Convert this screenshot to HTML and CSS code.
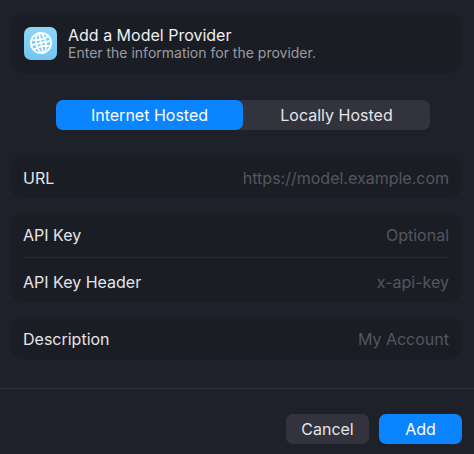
FILE: index.html
```html
<!DOCTYPE html>
<html lang="en">
<head>
    <meta charset="UTF-8">
    <meta name="viewport" content="width=device-width, initial-scale=1.0">
    <title>Add a Model Provider</title>
    <link rel="stylesheet" href="styles.css">
</head>
<body>

<div class="dialog">
    <div class="card header">
        <div class="app-icon">
            <svg width="24" height="24" viewBox="0 0 25 25" fill="none" stroke="#fff" stroke-width="1.8">
                <g transform="rotate(-12 12.5 12.5)">
                    <circle cx="12.5" cy="12.5" r="10.6"/>
                    <ellipse cx="12.5" cy="12.5" rx="5" ry="10.6"/>
                    <path d="M12.5 2v21"/>
                    <path d="M3.6 7.2q8.9 3.6 17.8 0"/>
                    <path d="M2 12.5h21"/>
                    <path d="M3.6 17.8q8.9-3.6 17.8 0"/>
                </g>
            </svg>
        </div>
        <div class="header-text">
            <h1>Add a Model Provider</h1>
            <p>Enter the information for the provider.</p>
        </div>
    </div>

    <div class="segments">
        <div class="segment active">Internet Hosted</div>
        <div class="segment">Locally Hosted</div>
    </div>

    <div class="card group url-group">
        <div class="row single">
            <span class="label">URL</span>
            <span class="placeholder">https://model.example.com</span>
        </div>
    </div>

    <div class="card group key-group">
        <div class="row">
            <span class="label">API Key</span>
            <span class="placeholder">Optional</span>
        </div>
        <div class="separator"></div>
        <div class="row lower">
            <span class="label">API Key Header</span>
            <span class="placeholder">x-api-key</span>
        </div>
    </div>

    <div class="card group desc-group">
        <div class="row single">
            <span class="label">Description</span>
            <span class="placeholder">My Account</span>
        </div>
    </div>

    <div class="footer">
        <button class="btn btn-cancel">Cancel</button>
        <button class="btn btn-add">Add</button>
    </div>
</div>

</body>
</html>
```

FILE: styles.css
```css
* {
    box-sizing: border-box;
}
html, body {
    margin: 0;
    padding: 0;
}
body {
    width: 474px;
    height: 454px;
    overflow: hidden;
    background-color: #1f212a;
    font-family: Inter, "Liberation Sans", sans-serif;
    color: #e4e5e8;
}
.dialog {
    padding-top: 12px;
}
.card {
    margin: 0 12px 0 10px;
    background-color: #1b1d25;
    border: 1px solid #1e2028;
    border-radius: 14px;
}
.header {
    display: flex;
    align-items: center;
    gap: 11px;
    height: 62px;
    padding: 0 13px;
}
.app-icon {
    width: 33px;
    height: 33px;
    flex: none;
    display: flex;
    align-items: center;
    justify-content: center;
    border-radius: 7px;
    background: linear-gradient(#8ed6f8, #70c6f1);
}
.header-text h1 {
    margin: 0;
    font-size: 16px;
    line-height: 18px;
    font-weight: 400;
    color: #eeeff1;
}
.header-text p {
    margin: 0;
    font-size: 14px;
    line-height: 17px;
    color: #9a9ba1;
}
.segments {
    display: flex;
    height: 30px;
    margin: 26px 44px 0 56px;
    background-color: #32333c;
    border-radius: 7px;
}
.segment {
    flex: 1;
    display: flex;
    align-items: center;
    justify-content: center;
    font-size: 16px;
    border-radius: 7px;
}
.segment.active {
    background-color: #0a84ff;
    color: #fff;
}
.group {
    padding: 0 12px;
}
.url-group {
    margin-top: 25px;
}
.key-group {
    margin-top: 13px;
}
.desc-group {
    margin-top: 13px;
}
.row {
    display: flex;
    align-items: center;
    justify-content: space-between;
    height: 44px;
    font-size: 16px;
}
.row.single {
    height: 42px;
    padding-top: 2px;
}
.row.lower {
    padding-top: 4px;
}
.placeholder {
    color: #54565e;
}
.separator {
    height: 1px;
    background-color: #2a2c35;
}
.footer {
    display: flex;
    justify-content: flex-end;
    gap: 10px;
    margin-top: 28px;
    padding: 25px 12px 0;
    border-top: 1px solid #2c2e36;
}
.btn {
    width: 83px;
    height: 30px;
    border: none;
    border-radius: 7px;
    font-family: inherit;
    font-size: 16px;
}
.btn-cancel {
    background-color: #32333c;
    color: #e4e5e8;
}
.btn-add {
    background-color: #0a84ff;
    color: #fff;
}
```
